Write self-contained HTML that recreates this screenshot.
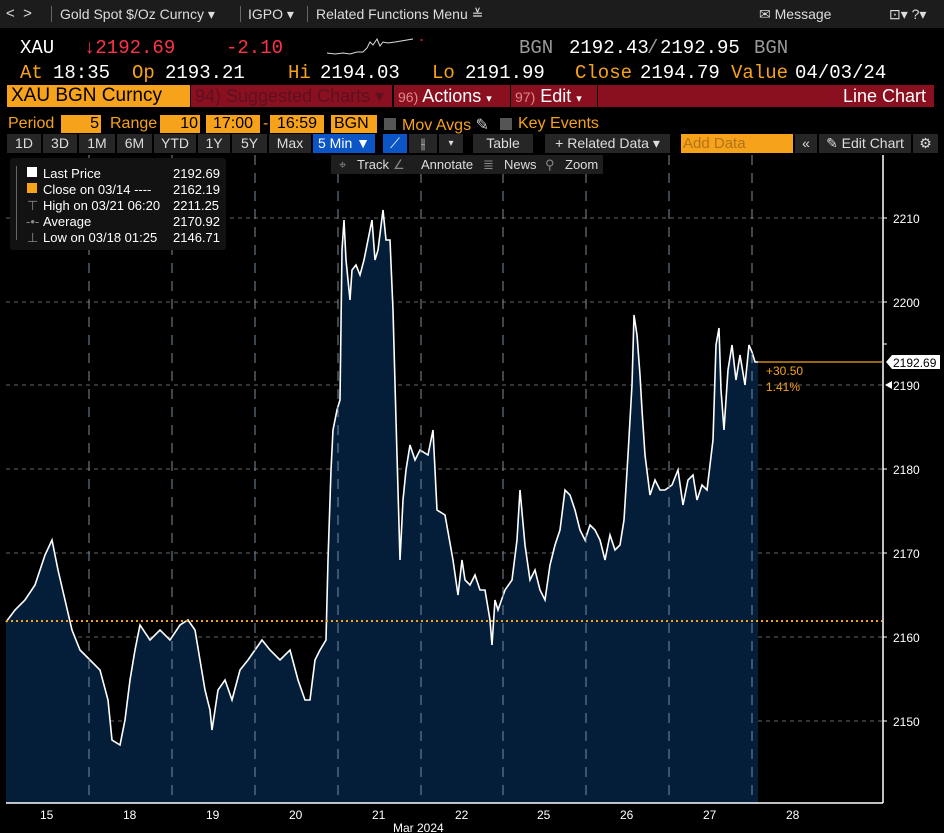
<!DOCTYPE html>
<html><head><meta charset="utf-8">
<style>
*{margin:0;padding:0;box-sizing:border-box}
body{width:944px;height:833px;background:#000;position:relative;overflow:hidden;font-family:"Liberation Sans",sans-serif;color:#fff}
.a{position:absolute;white-space:nowrap}
.mono{font-family:"Liberation Mono",monospace;font-size:19px}
.or{color:#f7a21b}
.btn{position:absolute;top:134px;height:19px;background:#262626;color:#ddd;font-size:14px;line-height:19px;text-align:center}
.ob{position:absolute;top:115px;height:18px;background:#f7a21b;color:#000;font-size:16px;line-height:18px}
</style></head><body>
<div class="a" style="left:0;top:0;width:944px;height:28px;background:#1c1c1c"></div>
<div class="a" style="left:6px;top:5px;font-size:15px;color:#ddd">&lt; &nbsp;&gt;</div>
<div class="a" style="left:51px;top:6px;width:1px;height:16px;background:#666"></div>
<div class="a" style="left:60px;top:6px;font-size:14px;color:#ddd">Gold Spot $/Oz Curncy ▾</div>
<div class="a" style="left:240px;top:6px;width:1px;height:16px;background:#666"></div>
<div class="a" style="left:248px;top:6px;font-size:14px;color:#ddd">IGPO ▾</div>
<div class="a" style="left:307px;top:6px;width:1px;height:16px;background:#666"></div>
<div class="a" style="left:316px;top:6px;font-size:14px;color:#ddd">Related Functions Menu ≚</div>
<div class="a" style="left:759px;top:6px;font-size:14px;color:#ddd">✉ Message</div>
<div class="a" style="left:889px;top:6px;font-size:14px;color:#ddd">⊡▾ ?▾</div>
<div class="a mono" style="left:20px;top:37px">XAU</div>
<div class="a mono" style="left:84px;top:37px;color:#ff3348">↓2192.69</div>
<div class="a mono" style="left:226px;top:37px;color:#ff3348">-2.10</div>
<svg class="a" style="left:325px;top:36px" width="100" height="22"><polyline fill="none" stroke="#ddd" stroke-width="1" points="2,17 10,18 18,17 25,18 32,16 38,16 42,12 45,6 48,9 52,3 55,10 58,6 63,7 70,6 76,5 82,4 88,3"/><line x1="95" y1="4" x2="98" y2="4" stroke="#f33"/></svg>
<div class="a mono" style="left:519px;top:37px;color:#999">BGN</div>
<div class="a mono" style="left:569px;top:37px">2192.43</div>
<div class="a mono" style="left:647px;top:37px;color:#999">/</div>
<div class="a mono" style="left:660px;top:37px">2192.95</div>
<div class="a mono" style="left:754px;top:37px;color:#999">BGN</div>
<div class="a mono or" style="left:20px;top:62px">At</div>
<div class="a mono" style="left:53px;top:62px">18:35</div>
<div class="a mono or" style="left:132px;top:62px">Op</div>
<div class="a mono" style="left:165px;top:62px">2193.21</div>
<div class="a mono or" style="left:288px;top:62px">Hi</div>
<div class="a mono" style="left:320px;top:62px">2194.03</div>
<div class="a mono or" style="left:432px;top:62px">Lo</div>
<div class="a mono" style="left:465px;top:62px">2191.99</div>
<div class="a mono or" style="left:575px;top:62px">Close</div>
<div class="a mono" style="left:640px;top:62px">2194.79</div>
<div class="a mono or" style="left:731px;top:62px">Value</div>
<div class="a mono" style="left:795px;top:62px">04/03/24</div>
<div class="a" style="left:7px;top:85px;width:183px;height:22px;background:#f7a21b;color:#000;font-size:19px;line-height:22px;padding-left:4px">XAU BGN Curncy</div>
<div class="a" style="left:191px;top:85px;width:201px;height:22px;background:#8a1020;color:#5c1020;font-size:18px;line-height:22px;padding-left:4px">94) Suggested Charts ▾</div>
<div class="a" style="left:394px;top:85px;width:116px;height:22px;background:#8a1020;font-size:18px;line-height:22px;padding-left:4px"><span style="color:#d88;font-size:14px">96)</span> Actions <span style="font-size:11px">▾</span></div>
<div class="a" style="left:511px;top:85px;width:86px;height:22px;background:#8a1020;font-size:18px;line-height:22px;padding-left:4px"><span style="color:#d88;font-size:14px">97)</span> Edit <span style="font-size:11px">▾</span></div>
<div class="a" style="left:598px;top:85px;width:336px;height:22px;background:#8a1020;font-size:18px;line-height:22px;text-align:right;padding-right:8px">Line Chart</div>
<div class="a or" style="left:8px;top:115px;font-size:16px">Period</div>
<div class="ob" style="left:61px;width:40px;text-align:right;padding-right:2px">5</div>
<div class="a or" style="left:110px;top:115px;font-size:16px">Range</div>
<div class="ob" style="left:160px;width:40px;text-align:right;padding-right:2px">10</div>
<div class="ob" style="left:206px;width:54px;text-align:center">17:00</div>
<div class="a or" style="left:263px;top:115px;font-size:16px">-</div>
<div class="ob" style="left:270px;width:54px;text-align:center">16:59</div>
<div class="ob" style="left:331px;width:46px;padding-left:3px">BGN</div>
<div class="a" style="left:384px;top:118px;width:12px;height:12px;background:#555"></div>
<div class="a or" style="left:402px;top:115px;font-size:16px">Mov Avgs <span style="color:#ccc">✎</span></div>
<div class="a" style="left:500px;top:118px;width:12px;height:12px;background:#555"></div>
<div class="a or" style="left:518px;top:115px;font-size:16px">Key Events</div>
<div class="btn" style="left:7px;width:34px">1D</div>
<div class="btn" style="left:43px;width:34px">3D</div>
<div class="btn" style="left:79px;width:36px">1M</div>
<div class="btn" style="left:117px;width:35px">6M</div>
<div class="btn" style="left:154px;width:42px">YTD</div>
<div class="btn" style="left:198px;width:32px">1Y</div>
<div class="btn" style="left:232px;width:35px">5Y</div>
<div class="btn" style="left:269px;width:42px">Max</div>
<div class="btn" style="left:313px;width:62px;background:#0b55c7;color:#fff">5 Min ▼</div>
<div class="btn" style="left:383px;width:24px;background:#0b55c7;color:#fff">⟋</div>
<div class="btn" style="left:409px;width:28px">⫲</div>
<div class="btn" style="left:439px;width:24px;font-size:10px">▾</div>
<div class="btn" style="left:473px;width:60px">Table</div>
<div class="btn" style="left:545px;width:125px">+ Related Data ▾</div>
<div class="a" style="left:681px;top:134px;width:112px;height:19px;background:#f7a21b;color:#b07418;font-size:15px;line-height:19px;padding-left:2px">Add Data</div>
<div class="btn" style="left:795px;width:22px">«</div>
<div class="btn" style="left:819px;width:92px">✎ Edit Chart</div>
<div class="btn" style="left:913px;width:25px">⚙</div>
<svg class="a" style="left:0;top:0" width="944" height="833">
<g stroke="#666" stroke-dasharray="4,4" stroke-width="1">
<line x1="6" y1="218" x2="882" y2="218"/><line x1="6" y1="302" x2="882" y2="302"/><line x1="6" y1="385" x2="882" y2="385"/><line x1="6" y1="469" x2="882" y2="469"/><line x1="6" y1="553" x2="882" y2="553"/><line x1="6" y1="637" x2="882" y2="637"/><line x1="6" y1="721" x2="882" y2="721"/>
</g>
<polygon fill="#041e3a" points="6,622 15,610 25,600 35,585 45,555 52,540 58,570 65,600 72,630 80,650 90,660 100,670 108,700 112,740 120,745 125,720 130,680 135,650 140,625 150,640 160,630 170,640 180,625 188,620 195,630 200,660 205,690 210,710 212,730 218,690 225,680 232,700 240,670 248,660 255,650 262,640 270,650 280,660 290,650 298,680 305,700 310,700 315,660 320,650 326,640 328,560 331,470 333,430 337,410 340,400 342,250 344,220 346,260 350,300 352,270 356,265 360,275 364,260 368,240 372,220 375,260 378,250 383,210 386,240 390,240 393,310 396,420 400,560 403,500 406,470 410,445 415,460 420,450 428,455 433,430 437,510 445,515 453,560 458,595 462,560 465,580 470,585 475,575 480,590 485,590 490,620 492,645 495,600 498,610 505,590 512,580 517,540 520,490 525,545 530,580 535,570 540,590 545,600 550,565 555,545 560,530 565,490 570,495 575,510 580,530 585,540 590,525 595,530 600,540 605,560 610,535 615,550 620,545 624,520 628,455 632,385 634,315 637,335 640,375 642,410 645,455 650,495 655,480 660,490 665,490 672,485 678,470 683,505 688,480 693,475 697,500 702,485 707,490 710,465 713,440 716,345 719,328 721,390 724,430 728,370 732,345 736,380 740,355 745,385 749,345 752,352 755,362 758,362 758,803 6,803"/>
<polyline fill="none" stroke="#fff" stroke-width="1.6" points="6,622 15,610 25,600 35,585 45,555 52,540 58,570 65,600 72,630 80,650 90,660 100,670 108,700 112,740 120,745 125,720 130,680 135,650 140,625 150,640 160,630 170,640 180,625 188,620 195,630 200,660 205,690 210,710 212,730 218,690 225,680 232,700 240,670 248,660 255,650 262,640 270,650 280,660 290,650 298,680 305,700 310,700 315,660 320,650 326,640 328,560 331,470 333,430 337,410 340,400 342,250 344,220 346,260 350,300 352,270 356,265 360,275 364,260 368,240 372,220 375,260 378,250 383,210 386,240 390,240 393,310 396,420 400,560 403,500 406,470 410,445 415,460 420,450 428,455 433,430 437,510 445,515 453,560 458,595 462,560 465,580 470,585 475,575 480,590 485,590 490,620 492,645 495,600 498,610 505,590 512,580 517,540 520,490 525,545 530,580 535,570 540,590 545,600 550,565 555,545 560,530 565,490 570,495 575,510 580,530 585,540 590,525 595,530 600,540 605,560 610,535 615,550 620,545 624,520 628,455 632,385 634,315 637,335 640,375 642,410 645,455 650,495 655,480 660,490 665,490 672,485 678,470 683,505 688,480 693,475 697,500 702,485 707,490 710,465 713,440 716,345 719,328 721,390 724,430 728,370 732,345 736,380 740,355 745,385 749,345 752,352 755,362 758,362"/>
<g stroke="#7a8a9a" stroke-dasharray="10,8" stroke-width="1">
<line x1="89" y1="155" x2="89" y2="802"/><line x1="172" y1="155" x2="172" y2="802"/><line x1="255" y1="155" x2="255" y2="802"/><line x1="338" y1="155" x2="338" y2="802"/><line x1="421" y1="155" x2="421" y2="802"/><line x1="503" y1="155" x2="503" y2="802"/><line x1="586" y1="155" x2="586" y2="802"/><line x1="669" y1="155" x2="669" y2="802"/><line x1="752" y1="155" x2="752" y2="802"/>
</g>
<line x1="6" y1="621" x2="882" y2="621" stroke="#f7a21b" stroke-width="2" stroke-dasharray="2,3"/>
<line x1="758" y1="362" x2="882" y2="362" stroke="#f7a21b" stroke-width="1.2"/>
<line x1="883" y1="155" x2="883" y2="803" stroke="#fff" stroke-width="1.5"/>
<line x1="6" y1="803" x2="883" y2="803" stroke="#fff" stroke-width="1.5"/>
<g stroke="#fff"><line x1="883" y1="218" x2="887" y2="218"/><line x1="883" y1="302" x2="887" y2="302"/><line x1="883" y1="469" x2="887" y2="469"/><line x1="883" y1="553" x2="887" y2="553"/><line x1="883" y1="637" x2="887" y2="637"/><line x1="883" y1="721" x2="887" y2="721"/><line x1="883" y1="344" x2="887" y2="344"/></g>
<polygon points="886,362 892,355 940,355 940,369 892,369" fill="#fff"/>
<polygon points="885,385 892,381 892,389" fill="#fff"/>
<g font-family="Liberation Sans,sans-serif" font-size="12" fill="#fff">
<text x="893" y="223">2210</text><text x="893" y="307">2200</text><text x="893" y="390">2190</text><text x="893" y="474">2180</text><text x="893" y="558">2170</text><text x="893" y="642">2160</text><text x="893" y="726">2150</text>
<text x="893" y="367" fill="#000">2192.69</text>
<text x="766" y="375" fill="#f7a21b">+30.50</text><text x="766" y="391" fill="#f7a21b">1.41%</text>
<text x="40" y="819">15</text><text x="123" y="819">18</text><text x="206" y="819">19</text><text x="289" y="819">20</text><text x="372" y="819">21</text><text x="455" y="819">22</text><text x="537" y="819">25</text><text x="620" y="819">26</text><text x="703" y="819">27</text><text x="786" y="819">28</text>
<text x="393" y="832">Mar 2024</text>
</g>
</svg>
<div class="a" style="left:331px;top:155px;width:272px;height:19px;background:#1e1e1e;font-size:13px;line-height:19px;color:#ddd">
<span style="position:absolute;left:8px;color:#888">⌖</span><span style="position:absolute;left:26px">Track</span>
<span style="position:absolute;left:62px;color:#888">∠</span><span style="position:absolute;left:90px">Annotate</span>
<span style="position:absolute;left:152px;color:#888">≣</span><span style="position:absolute;left:173px">News</span>
<span style="position:absolute;left:214px;color:#888">⚲</span><span style="position:absolute;left:234px">Zoom</span></div>
<div class="a" style="left:10px;top:158px;width:216px;height:92px;background:#121212;border-radius:3px;font-size:13px;color:#fff">
<div style="position:absolute;left:6px;top:8px;width:1px;height:74px;background:#666"></div>
<div style="position:absolute;left:17px;top:9px;width:10px;height:10px;background:#fff"></div>
<div style="position:absolute;left:17px;top:25px;width:10px;height:10px;background:#f7a21b"></div>
<div style="position:absolute;left:17px;top:40px;color:#888">⊤</div>
<div style="position:absolute;left:16px;top:56px;color:#888">-•-</div>
<div style="position:absolute;left:17px;top:72px;color:#888">⊥</div>
<div style="position:absolute;left:33px;top:8px;line-height:16px">Last Price<br>Close on 03/14 ----<br>High on 03/21 06:20<br>Average<br>Low on 03/18 01:25</div>
<div style="position:absolute;left:163px;top:8px;line-height:16px">2192.69<br>2162.19<br>2211.25<br>2170.92<br>2146.71</div>
</div>
</body></html>
